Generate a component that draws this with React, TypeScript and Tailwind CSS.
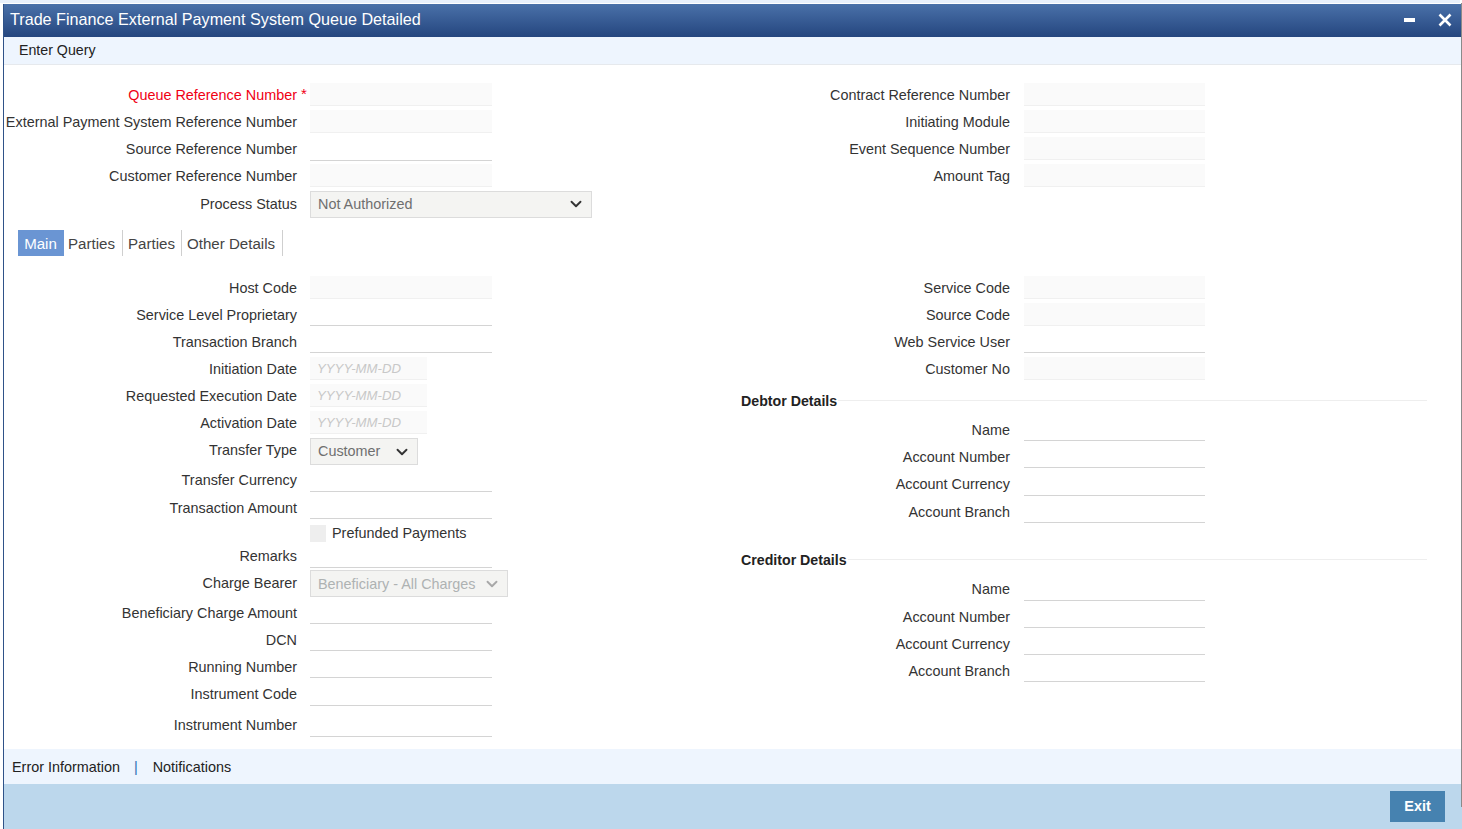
import { ChevronDown } from "lucide-react";

type FieldProps = {
  label: string;
  kind?: "readonly" | "line" | "date";
  rowClass?: string;
  labelClass?: string;
  wide?: boolean;
};

const Field = ({ label, kind = "readonly", rowClass = "h-[27px]", labelClass = "pt-[2px]", wide }: FieldProps) => {
  const inputClass =
    kind === "line"
      ? "bg-white border-[#d4d4d4]"
      : "bg-[#fafafa] border-[#f0f0f0]";
  return (
    <div className={`flex items-center ${rowClass}`}>
      <label className={`text-right text-[14.4px] leading-none text-[#333] ${wide ? "w-[293px] mr-[13px]" : "w-[269px] mr-[14px]"} ${labelClass}`}>
        {label}
      </label>
      {kind === "date" ? (
        <input
          readOnly
          placeholder="YYYY-MM-DD"
          className="h-[23px] w-[117px] border-b bg-[#fafafa] border-[#f0f0f0] px-[7px] text-[13.2px] italic outline-none placeholder:text-[#c8c8c8]"
        />
      ) : (
        <input readOnly className={`h-[23px] border-b outline-none ${wide ? "w-[182px]" : "w-[181px]"} ${inputClass}`} />
      )}
    </div>
  );
};

type SelectProps = {
  label: string;
  value: string;
  width: string;
  muted?: boolean;
  labelClass?: string;
  valueClass?: string;
};

const SelectBox = ({ label, value, width, muted, labelClass = "", valueClass = "" }: SelectProps) => (
  <div className="flex items-center h-full">
    <label className={`w-[293px] mr-[13px] text-right text-[14.4px] leading-none text-[#333] ${labelClass}`}>{label}</label>
    <div className={`flex h-[27px] items-center justify-between border border-[#dcdcdc] bg-[#f4f4f2] pl-[7px] pr-[6px] text-[14.4px] ${width} ${muted ? "text-[#aeb2b2]" : "text-[#6f6f6f]"}`}>
      <span className={valueClass}>{value}</span>
      <ChevronDown size={18} strokeWidth={2.5} className={muted ? "text-[#a8a8a8]" : "text-[#333]"} />
    </div>
  </div>
);

const SectionTitle = ({ title, className }: { title: string; className: string }) => (
  <div className={`flex items-center pr-[35px] ${className}`}>
    <span className="pt-[2px] text-[14.2px] font-bold leading-none text-[#222]">{title}</span>
    <div className="ml-[1px] h-px flex-1 bg-[#eeeeee]" />
  </div>
);

export default function App() {
  return (
    <div className="relative flex h-[829px] w-[1462px] flex-col overflow-hidden bg-white font-['Liberation_Sans',Arial,sans-serif]">
      <div className="mr-[2px] h-[3px] shrink-0 bg-[#e8f0fb]" />
      <div className="mt-px ml-[3px] flex min-h-0 flex-1 flex-col border-l border-[#2f5288]">
        <div className="flex h-[33px] shrink-0 items-center justify-between bg-gradient-to-b from-[#4a71a9] to-[#25467f] pl-[6px] pr-[9px] mr-[1px]">
          <h1 className="pb-[2px] text-[16.16px] font-normal text-white">Trade Finance External Payment System Queue Detailed</h1>
          <div className="-mt-[1px] flex items-center gap-[23px]">
            <div className="h-[4px] w-[11px] bg-white" />
            <svg width="14" height="14" viewBox="0 0 14 14" className="text-white">
              <path d="M1.5 1.5 12.5 12.5M12.5 1.5 1.5 12.5" stroke="currentColor" strokeWidth="2.6" />
            </svg>
          </div>
        </div>

        <div className="flex h-[28px] shrink-0 items-center border-b border-[#e6e9ed] bg-[#eef5fe] pl-[15px] text-[14.2px] text-[#222] mr-[1px]">
          Enter Query
        </div>

        <div className="min-h-0 flex-1">
          <div className="mt-[16px] flex">
            <div className="w-[737px]">
              <div className="flex h-[27px] items-center">
                <label className="relative w-[293px] mr-[13px] pt-[2px] text-right text-[14.4px] leading-none text-[#f00014]">
                  Queue Reference Number
                  <span className="absolute left-[297px] top-0 text-[15px] font-normal text-[#f00014]">*</span>
                </label>
                <input readOnly className="h-[23px] w-[182px] border-b border-[#f0f0f0] bg-[#fafafa] outline-none" />
              </div>
              <Field wide label="External Payment System Reference Number" />
              <Field wide label="Source Reference Number" kind="line" rowClass="h-[27px] pt-px" labelClass="" />
              <Field wide label="Customer Reference Number" />
              <div className="h-[30px]">
                <SelectBox label="Process Status" value="Not Authorized" width="w-[282px]" valueClass="pt-[2px]" />
              </div>
            </div>
            <div>
              <Field label="Contract Reference Number" />
              <Field label="Initiating Module" />
              <Field label="Event Sequence Number" />
              <Field label="Amount Tag" />
            </div>
          </div>

          <div className="mt-[11px] ml-[14px] flex h-[26px] items-stretch text-[15.1px] leading-[28px] text-[#444]">
            <div className="w-[46px] bg-[#6a95d3] pr-[1px] text-center text-white">Main</div>
            <div className="w-[59px] border-r border-[#cfcfcf] pl-[4px]">Parties</div>
            <div className="w-[59px] border-r border-[#cfcfcf] pl-[5px]">Parties</div>
            <div className="w-[101px] border-r border-[#cfcfcf] pl-[5px]">Other Details</div>
          </div>

          <div className="mt-[18px] flex">
            <div className="w-[737px]">
              <Field wide label="Host Code" />
              <Field wide label="Service Level Proprietary" kind="line" />
              <Field wide label="Transaction Branch" kind="line" />
              <Field wide label="Initiation Date" kind="date" />
              <Field wide label="Requested Execution Date" kind="date" />
              <Field wide label="Activation Date" kind="date" />
              <div className="h-[31px]">
                <SelectBox label="Transfer Type" value="Customer" width="w-[108px]" labelClass="-mt-[3px]" />
              </div>
              <Field wide label="Transfer Currency" kind="line" labelClass="" />
              <Field wide label="Transaction Amount" kind="line" />
              <div className="flex h-[24px] items-center pl-[306px]">
                <div className="h-[17px] w-[16px] bg-[#eeeeee]" />
                <span className="ml-[6px] text-[14.4px] leading-none text-[#333]">Prefunded Payments</span>
              </div>
              <Field wide label="Remarks" kind="line" rowClass="h-[23px]" labelClass="-mt-[1px]" />
              <div className="h-[31px]">
                <SelectBox label="Charge Bearer" value="Beneficiary - All Charges" width="w-[198px]" muted labelClass="-mt-[1px]" valueClass="pt-[2px]" />
              </div>
              <Field wide label="Beneficiary Charge Amount" kind="line" labelClass="mt-[2px]" />
              <Field wide label="DCN" kind="line" />
              <Field wide label="Running Number" kind="line" />
              <Field wide label="Instrument Code" kind="line" rowClass="h-[28px]" labelClass="" />
              <Field wide label="Instrument Number" kind="line" rowClass="h-[30px] pt-[5px]" labelClass="" />
            </div>
            <div className="flex-1">
              <Field label="Service Code" />
              <Field label="Source Code" />
              <Field label="Web Service User" kind="line" />
              <Field label="Customer No" />
              <SectionTitle title="Debtor Details" className="mt-[11px] h-[15px]" />
              <div className="mt-[8px]">
                <Field label="Name" kind="line" />
                <Field label="Account Number" kind="line" />
                <Field label="Account Currency" kind="line" rowClass="h-[28px]" labelClass="" />
                <Field label="Account Branch" kind="line" />
              </div>
              <SectionTitle title="Creditor Details" className="mt-[27px] h-[15px]" />
              <div className="mt-[9px]">
                <Field label="Name" kind="line" labelClass="" />
                <Field label="Account Number" kind="line" />
                <Field label="Account Currency" kind="line" />
                <Field label="Account Branch" kind="line" />
              </div>
            </div>
          </div>
        </div>

        <div className="flex h-[35px] shrink-0 items-center bg-[#eef5fe] pl-[8px] pt-[2px] text-[14.4px] text-[#222] mr-[1px]">
          <span>Error Information</span>
          <span className="ml-[14px] mr-[15px] text-[#2a72b5]">|</span>
          <span>Notifications</span>
        </div>
        <div className="flex h-[45px] shrink-0 items-start justify-end bg-[#bcd7ec] pt-[7px] pr-[17px]">
          <button className="h-[31px] w-[55px] bg-[#4682b0] text-[14.4px] font-bold text-white">Exit</button>
        </div>
      </div>
      <div className="absolute right-0 top-[3px] h-[804px] w-px bg-[#8a8a8a]" />
    </div>
  );
}
